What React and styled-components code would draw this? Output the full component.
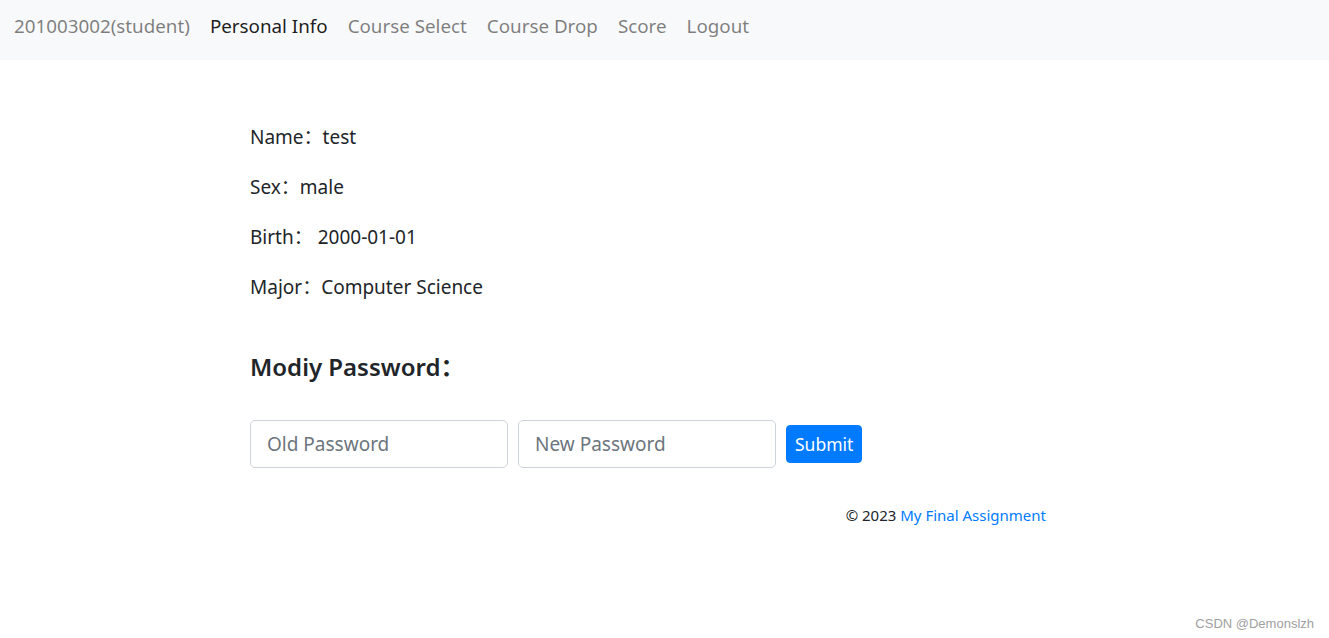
import styled, { createGlobalStyle } from 'styled-components'

const GlobalStyle = createGlobalStyle`
  body {
    margin: 0;
    background: #ffffff;
    font-family: 'Noto Sans', 'Noto Sans CJK SC', sans-serif;
    color: #212529;
  }
`

const navItems = ['Personal Info', 'Course Select', 'Course Drop', 'Score', 'Logout']

const info = [
  { label: 'Name', value: 'test' },
  { label: 'Sex', value: 'male' },
  { label: 'Birth', value: ' 2000-01-01' },
  { label: 'Major', value: 'Computer Science' }
]

export default function App() {
  return (
    <Page>
      <GlobalStyle />
      <Navbar>
        <Brand>201003002(student)</Brand>
        {navItems.map((item, i) => (
          <NavLink key={item} $active={i === 0}>
            {item}
          </NavLink>
        ))}
      </Navbar>
      <Main>
        {info.map(row => (
          <InfoLine key={row.label}>
            {row.label}
            <Colon>：</Colon>
            <span>{row.value}</span>
          </InfoLine>
        ))}
        <Heading>
          Modiy Password<Colon>：</Colon>
        </Heading>
        <Form>
          <Input placeholder="Old Password" type="password" />
          <Input placeholder="New Password" type="password" />
          <Button type="button">Submit</Button>
        </Form>
        <Footer>
          © 2023 <FooterLink href="#">My Final Assignment</FooterLink>
        </Footer>
      </Main>
      <Watermark>CSDN @Demonslzh</Watermark>
    </Page>
  )
}

const Page = styled.div`
  position: relative;
  width: 100%;
  height: 638px;
  overflow: hidden;
`

const Navbar = styled.nav`
  display: flex;
  align-items: flex-start;
  height: 60px;
  background-color: #f8f9fa;
  padding: 11px 4px 0;
  box-sizing: border-box;
`

const Brand = styled.span`
  font-size: 18.8px;
  line-height: 30px;
  color: rgba(0, 0, 0, 0.5);
  padding: 0 10px;
  white-space: nowrap;
`

const NavLink = styled.span`
  font-size: 18.8px;
  line-height: 30px;
  padding: 0 10px;
  white-space: nowrap;
  color: ${props => (props.$active ? 'rgba(0, 0, 0, 0.9)' : 'rgba(0, 0, 0, 0.5)')};
`

const Main = styled.main`
  width: 796px;
  padding: 61px 0 0 250px;
`

const InfoLine = styled.div`
  font-size: 19px;
  line-height: 30px;
  height: 30px;
  margin-bottom: 20px;
  white-space: pre;
`

const Colon = styled.span`
  font-family: 'Noto Sans CJK SC', sans-serif;
`

const Heading = styled.h2`
  margin: 47px 0 35px;
  font-size: 24px;
  line-height: 36px;
  font-weight: 600;
`

const Form = styled.div`
  display: flex;
  align-items: center;
  gap: 10px;
`

const Input = styled.input`
  width: 258px;
  height: 48px;
  box-sizing: border-box;
  padding: 0 16px;
  font-family: inherit;
  font-size: 19px;
  color: #495057;
  border: 1px solid #ced4da;
  border-radius: 5px;
  outline: none;

  &::placeholder {
    color: #6c757d;
  }
`

const Button = styled.button`
  height: 38px;
  padding: 0 8px;
  font-family: inherit;
  font-size: 17.5px;
  color: #ffffff;
  background-color: #007bff;
  border: 1px solid #007bff;
  border-radius: 4px;
`

const Footer = styled.footer`
  margin-top: 35px;
  text-align: right;
  font-size: 15px;
  line-height: 24px;
`

const FooterLink = styled.a`
  color: #007bff;
  text-decoration: none;
`

const Watermark = styled.span`
  position: absolute;
  right: 15px;
  bottom: 7px;
  font-family: 'Liberation Sans', sans-serif;
  font-size: 13px;
  color: #a0a0a0;
`
